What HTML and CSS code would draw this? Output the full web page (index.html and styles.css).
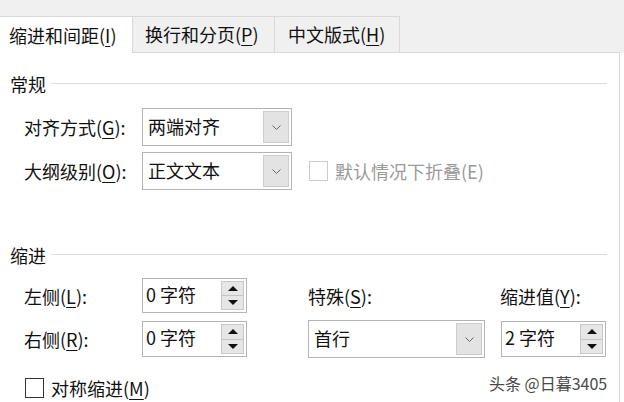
FILE: index.html
```html
<!DOCTYPE html>
<html lang="zh-CN">
<head>
<meta charset="utf-8">
<title>段落</title>
<link rel="stylesheet" href="styles.css">
</head>
<body>
<div class="dialog">
  <div class="tabbar">
    <div class="tab tab-active tab1">缩进和间距(<u>I</u>)</div>
    <div class="tab tab2">换行和分页(<u>P</u>)</div>
    <div class="tab tab3">中文版式(<u>H</u>)</div>
    <div class="tab-fill"></div>
  </div>
  <div class="panel">
    <div class="section-head head-general"><span>常规</span><i class="rule"></i></div>
    <div class="form-rows">
      <div class="form-row">
        <span class="label">对齐方式(<u>G</u>):</span>
        <div class="select sel-small"><span class="sel-text">两端对齐</span><span class="drop"><svg width="9" height="5" viewBox="0 0 9 5"><polyline points="0.5,0.5 4.5,4.5 8.5,0.5" fill="none" stroke="#666" stroke-width="1"/></svg></span></div>
      </div>
      <div class="form-row">
        <span class="label">大纲级别(<u>O</u>):</span>
        <div class="select sel-small"><span class="sel-text">正文文本</span><span class="drop"><svg width="9" height="5" viewBox="0 0 9 5"><polyline points="0.5,0.5 4.5,4.5 8.5,0.5" fill="none" stroke="#666" stroke-width="1"/></svg></span></div>
        <label class="check disabled"><span class="box"></span><span>默认情况下折叠(E)</span></label>
      </div>
    </div>

    <div class="section-head head-indent"><span>缩进</span><i class="rule"></i></div>
    <div class="indent-grid">
      <span class="label g-l1">左侧(<u>L</u>):</span>
      <div class="spin g-s1"><span class="spin-text">0 字符</span><span class="spin-btns"><span class="sb up"></span><span class="sb down"></span></span></div>
      <span class="label g-special">特殊(<u>S</u>):</span>
      <span class="label g-value">缩进值(<u>Y</u>):</span>

      <span class="label g-l2">右侧(<u>R</u>):</span>
      <div class="spin g-s2"><span class="spin-text">0 字符</span><span class="spin-btns"><span class="sb up"></span><span class="sb down"></span></span></div>
      <div class="select sel-wide g-sel"><span class="sel-text">首行</span><span class="drop"><svg width="9" height="5" viewBox="0 0 9 5"><polyline points="0.5,0.5 4.5,4.5 8.5,0.5" fill="none" stroke="#666" stroke-width="1"/></svg></span></div>
      <div class="spin g-s3"><span class="spin-text">2 字符</span><span class="spin-btns"><span class="sb up"></span><span class="sb down"></span></span></div>
    </div>

    <label class="check mirror"><span class="box"></span><span>对称缩进(<u>M</u>)</span></label>
  </div>
  <div class="watermark">头条 @日暮3405</div>
</div>
</body>
</html>
```

FILE: styles.css
```css
html, body {
  margin: 0;
  padding: 0;
  background: #ffffff;
}
body {
  width: 624px;
  height: 402px;
  overflow: hidden;
  font-family: "Noto Sans CJK SC", "Microsoft YaHei", sans-serif;
  font-size: 18px;
  color: #111;
}
u { text-decoration: underline; text-underline-offset: 3px; text-decoration-thickness: 1px; }

.dialog { position: relative; width: 624px; height: 402px; }

.tabbar {
  height: 53px;
  background: #f0f0f0;
  display: flex;
  align-items: flex-end;
}
.tab {
  box-sizing: border-box;
  height: 37px;
  border-top: 1px solid #d9d9d9;
  border-right: 1px solid #d9d9d9;
  border-bottom: 1px solid #d9d9d9;
  display: flex;
  align-items: center;
  line-height: 1;
  padding-bottom: 1px;
  white-space: nowrap;
}
.tab-active { background: #ffffff; border-bottom: none; padding-bottom: 0; }
.tab1 { width: 133px; padding-left: 9px; }
.tab2 { width: 142px; padding-left: 12px; }
.tab3 { width: 125px; padding-left: 13px; }
.tab-fill {
  width: 220px;
  height: 1px;
  background: #d9d9d9;
}

.panel {
  box-sizing: border-box;
  width: 620px;
  height: 349px;
  border-right: 1px solid #d9d9d9;
  padding: 0 12px 0 10px;
}

.section-head {
  display: flex;
  align-items: center;
  height: 22px;
  line-height: 22px;
}
.section-head .rule {
  flex: 1;
  height: 1px;
  background: #dcdcdc;
  margin-left: 5px;
  margin-top: -1px;
}
.head-general { padding-top: 20px; }
.head-indent { margin-top: 54px; }

.form-rows {
  margin-top: 13px;
  padding-left: 14px;
  display: flex;
  flex-direction: column;
  gap: 6px;
}
.form-row {
  display: flex;
  align-items: center;
  height: 38px;
}
.label { white-space: nowrap; line-height: 1; }
.form-row .label { width: 118px; }

.select {
  box-sizing: border-box;
  height: 38px;
  border: 1px solid #b4b4b4;
  background: #fff;
  display: flex;
  align-items: center;
  padding: 2px;
}
.sel-small { width: 150px; }
.sel-wide { width: 177px; }
.sel-text { flex: 1; padding-left: 3px; line-height: 1; padding-bottom: 2px; }
.drop {
  box-sizing: border-box;
  width: 26px;
  height: 100%;
  background: #e3e3e3;
  border: 1px solid #cdcdcd;
  display: flex;
  align-items: center;
  justify-content: center;
}
.drop svg { display: block; }

.check {
  display: flex;
  align-items: center;
  gap: 7px;
  line-height: 1;
}
.check .box {
  box-sizing: border-box;
  width: 19px;
  height: 20px;
  border: 1px solid #333;
  background: #fff;
}
.check.disabled { color: #9a9a9a; margin-left: 17px; }
.check.disabled .box { border-color: #cccccc; }

.indent-grid {
  margin-top: 12px;
  padding-left: 14px;
  display: grid;
  grid-template-columns: 118px 105px 61px 177px 16px 105px;
  grid-template-rows: 35px 38px;
  row-gap: 7px;
  align-items: center;
}
.g-l1 { grid-column: 1; grid-row: 1; }
.g-s1 { grid-column: 2; grid-row: 1; }
.g-special { grid-column: 4; grid-row: 1; }
.g-value { grid-column: 6; grid-row: 1; margin-left: -1px; }
.g-l2 { grid-column: 1; grid-row: 2; }
.g-s2 { grid-column: 2; grid-row: 2; }
.g-sel { grid-column: 4; grid-row: 2; }
.g-s3 { grid-column: 6; grid-row: 2; }

.spin {
  box-sizing: border-box;
  height: 35px;
  border: 1px solid #b4b4b4;
  background: #fff;
  display: flex;
  align-items: center;
  padding: 2px 2px 2px 3px;
}
.g-s2, .g-s3 { height: 36px; }
.spin-text { flex: 1; line-height: 1; padding-bottom: 4px; }
.spin-btns {
  width: 23px;
  height: 100%;
  display: flex;
  flex-direction: column;
  border: 1px solid #c8c8c8;
  box-sizing: border-box;
  background: #e6e6e6;
}
.sb {
  flex: 1;
  display: flex;
  align-items: center;
  justify-content: center;
}
.sb.up { border-bottom: 1px solid #c4c4c4; }
.sb.up::before {
  content: "";
  border-left: 5px solid transparent;
  border-right: 5px solid transparent;
  border-bottom: 5px solid #111;
}
.sb.down::before {
  content: "";
  border-left: 5px solid transparent;
  border-right: 5px solid transparent;
  border-top: 5px solid #111;
}

.mirror { margin-top: 20px; margin-left: 15px; height: 20px; }
.mirror .box { border-color: #333; }

.watermark {
  position: absolute;
  left: 489px;
  top: 373px;
  font-size: 16px;
  line-height: 20px;
  color: #4a4a4a;
  text-shadow: 0 0 2px #fff;
  white-space: nowrap;
}
```
